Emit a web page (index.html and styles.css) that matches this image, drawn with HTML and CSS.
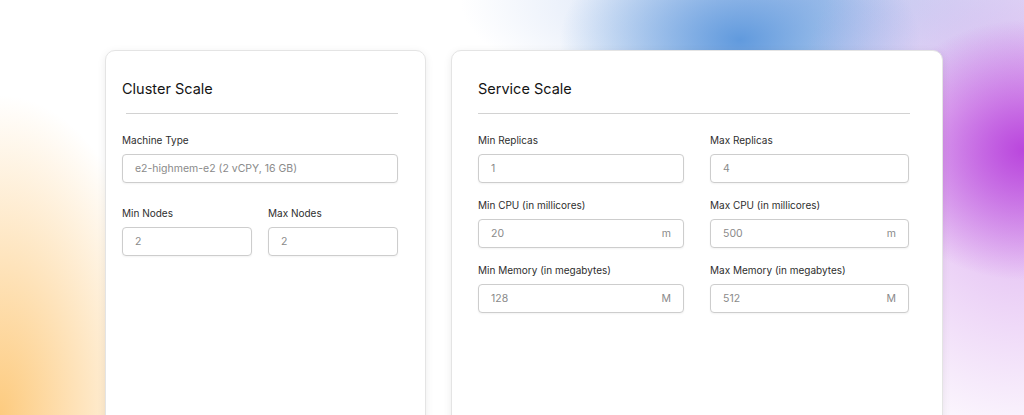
FILE: index.html
```html
<!DOCTYPE html>
<html>
<head>
<meta charset="utf-8">
<title>Scale settings</title>
<link rel="stylesheet" href="styles.css">
</head>
<body>
  <div class="board">
    <div class="card cluster">
      <h2 class="card-title">Cluster Scale</h2>
      <div class="divider"></div>
      <div class="field">
        <label>Machine Type</label>
        <div class="input"><span class="value">e2-highmem-e2 (2 vCPY, 16 GB)</span></div>
      </div>
      <div class="pair">
        <div class="field">
          <label>Min Nodes</label>
          <div class="input"><span class="value">2</span></div>
        </div>
        <div class="field">
          <label>Max Nodes</label>
          <div class="input"><span class="value">2</span></div>
        </div>
      </div>
    </div>

    <div class="card service">
      <h2 class="card-title">Service Scale</h2>
      <div class="divider"></div>
      <div class="grid">
        <div class="field">
          <label>Min Replicas</label>
          <div class="input"><span class="value">1</span></div>
        </div>
        <div class="field">
          <label>Max Replicas</label>
          <div class="input"><span class="value">4</span></div>
        </div>
        <div class="field">
          <label>Min CPU (in millicores)</label>
          <div class="input"><span class="value">20</span><span class="unit">m</span></div>
        </div>
        <div class="field">
          <label>Max CPU (in millicores)</label>
          <div class="input"><span class="value">500</span><span class="unit">m</span></div>
        </div>
        <div class="field">
          <label>Min Memory (in megabytes)</label>
          <div class="input"><span class="value">128</span><span class="unit">M</span></div>
        </div>
        <div class="field">
          <label>Max Memory (in megabytes)</label>
          <div class="input"><span class="value">512</span><span class="unit">M</span></div>
        </div>
      </div>
    </div>
  </div>
</body>
</html>
```

FILE: styles.css
```css
* {
  padding: 0;
  margin: 0;
  box-sizing: border-box;
}

html, body {
  height: 100%;
  overflow: hidden;
}

body {
  font-family: Inter, "Noto Sans", sans-serif;
  color: #1c1c1c;
  background:
    radial-gradient(ellipse 150px 130px at 1024px 150px, rgba(184, 64, 220, 0.95), rgba(200, 120, 230, 0) 100%),
    radial-gradient(ellipse 240px 300px at 1024px 170px, rgba(210, 150, 235, 0.75), rgba(230, 200, 245, 0) 100%),
    radial-gradient(ellipse 180px 110px at 740px 40px, rgba(90, 150, 220, 0.95), rgba(140, 180, 230, 0) 100%),
    radial-gradient(ellipse 360px 120px at 820px 0px, rgba(165, 190, 235, 0.75), rgba(200, 210, 240, 0) 100%),
    radial-gradient(ellipse 170px 320px at 0px 415px, rgba(253, 200, 120, 0.95), rgba(255, 230, 190, 0) 100%),
    #fff;
}

.board {
  display: flex;
  gap: 25px;
  padding: 50px 0 0 105px;
}

.card {
  height: 400px;
  background: #fff;
  border: 1px solid #e4e4e4;
  border-radius: 10px;
  box-shadow: 0 2px 8px rgba(0, 0, 0, 0.08);
  padding-top: 28px;
}

.cluster {
  width: 321px;
  padding-left: 16px;
  padding-right: 27px;
}

.service {
  width: 492px;
  padding-left: 26px;
  padding-right: 32px;
}

.card-title {
  font-size: 14.5px;
  font-weight: 400;
  line-height: 20px;
  color: #141414;
}

.divider {
  height: 1px;
  background: #d2d2d2;
  margin-top: 14px;
  margin-bottom: 18px;
}

.cluster .divider {
  margin-left: 4px;
}

.field label {
  display: block;
  font-size: 10px;
  line-height: 16px;
  color: #2e2e2e;
}

.input {
  display: flex;
  align-items: center;
  justify-content: space-between;
  height: 29px;
  margin-top: 6px;
  padding: 0 12px 0 12px;
  border: 1px solid #cdcdcd;
  border-radius: 4px;
  background: #fff;
  box-shadow: 0 1px 2px rgba(0, 0, 0, 0.05);
  font-size: 10.5px;
  color: #8a8a8a;
}

.pair {
  display: grid;
  grid-template-columns: 1fr 1fr;
  gap: 16px;
  margin-top: 22px;
}

.grid {
  display: grid;
  grid-template-columns: 206px 199px;
  column-gap: 26px;
  row-gap: 14px;
}
```
